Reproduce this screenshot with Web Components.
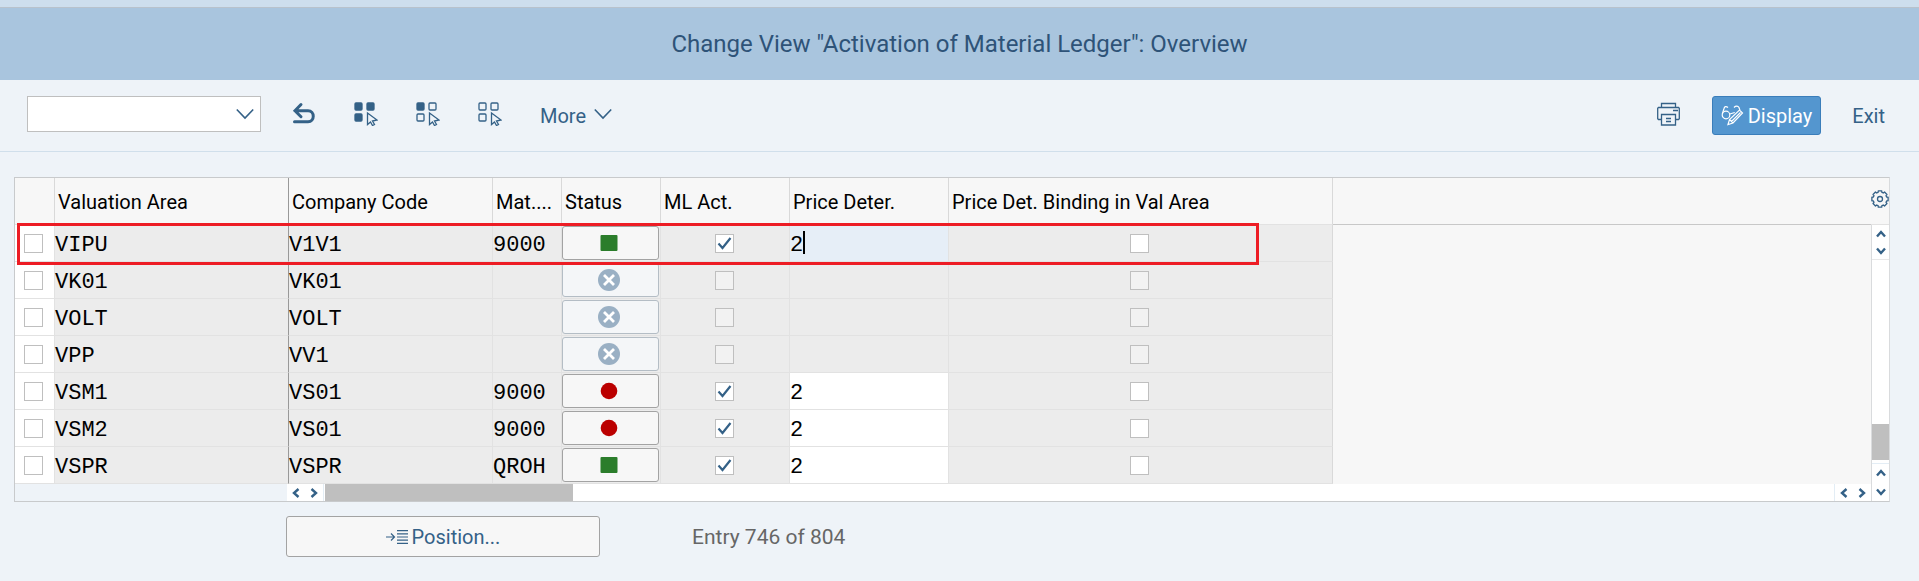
<!DOCTYPE html>
<html lang="en">
<head>
<meta charset="utf-8">
<title>Change View "Activation of Material Ledger": Overview</title>
<style>
  html, body { margin: 0; min-height: 100vh; background: #eef3f8; }
  body { font: 20px/24px Roboto, "Liberation Sans", sans-serif; color: #000; }
</style>
</head>
<body>
<ledger-app></ledger-app>

<script>
const define = (name, html, setup) => {
  const tpl = document.createElement('template');
  tpl.innerHTML = html;
  customElements.define(name, class extends HTMLElement {
    connectedCallback() {
      if (this.shadowRoot) return;
      this.attachShadow({ mode: 'open' }).append(tpl.content.cloneNode(true));
      if (setup) setup.call(this, this.shadowRoot);
    }
  });
};

/* ---------- icons ---------- */
const pointer = '<path d="M13.5 11v11.500l3-2.500 2 3.500 2-1-2-3.500 4.500-1z"/>';
const box = (x, y, on) => `<rect x="${x}" y="${y}" width="7" height="7" rx="1" ${on ? 'fill="currentColor"' : ''}/>`;
const selectIcon = (a, b, c) => [24, 24, 1.3, box(1, 1, a) + box(13, 1, b) + box(1, 12, c) + pointer];
const gearPath = () => {
  const p = [];
  for (let i = 0; i < 8; i++) {
    for (const [r, d] of [[6.9, -16], [8.3, -12], [8.3, 12], [6.9, 16]]) {
      const a = (i * 45 + d) * Math.PI / 180;
      p.push((9 + r * Math.sin(a)).toFixed(2) + ' ' + (9 - r * Math.cos(a)).toFixed(2));
    }
  }
  return 'M' + p.join('L') + 'z';
};
const ICONS = {
  back: [24, 24, 3, '<path stroke-linecap="round" d="M9 2.500 3 8.700l6 6M3 8.700h13c7 0 7 11 0 11H2.500"/>'],
  all: selectIcon(1, 1, 1),
  block: selectIcon(1, 0, 0),
  none: selectIcon(0, 0, 0),
  caret: [18, 12, 1.6, '<path d="M.8 1.500 9 10l8.200-8.500"/>'],
  print: [24, 24, 1.3, '<path d="M4.500 5.500v-4h14v4M4.500 17.500h-3l-.8-.8V6.300l.8-.8h20l.8.8v10.400l-.8.8h-3M16 8.500h5M9 16.500h5M9 19.500h5"/><path d="M4.500 12.500h14v10.500h-14z"/>'],
  toggle: [23, 21, 1.2, '<circle cx="5" cy="10" r="3.800"/><path d="M1.300 9 3 3.500C3.500 1.500 5 .8 7 2.500M8.800 9l5-1.500M13 2.500c2-2 4-1.500 5 0l1 3M7 19.500l1.500-5 10-9.500 3 3L12 18zM8.500 14.500l3.500 3.500M10.500 16.500l9-9"/>'],
  gear: [18, 18, 1.3, `<path stroke-linejoin="round" d="${gearPath()}"/><circle cx="9" cy="9" r="2.500"/>`],
  goto: [22, 14, 1.2, '<path d="M0 7h8M5 3.500 8.500 7 5 10.500M11 .6h11M11 3.800h11M11 7h11M11 10.200h11M11 13.400h11"/>'],
  up: [10, 8, 2.4, '<path d="M1 6.500 5 2l4 4.500"/>'],
  down: [10, 8, 2.4, '<path d="M1 1.500 5 6l4-4.500"/>'],
  left: [8, 10, 2.4, '<path d="M6.500 1 2 5l4.500 4"/>'],
  right: [8, 10, 2.4, '<path d="M1.500 1 6 5l-4.500 4"/>'],
  ok: [18, 18, 0, '<rect x=".5" y="1" width="17" height="16" rx="1" fill="#2b7d2b"/>'],
  stop: [18, 18, 0, '<circle cx="9" cy="9" r="8.300" fill="#bb0000"/>'],
  off: [22, 22, 2.8, '<circle cx="11" cy="11" r="11" fill="#9ab0c4" stroke="none"/><path stroke="#fff" d="M6 6l10 10M16 6 6 16"/>']
};
define('ui-icon', `
<style>:host { display: inline-flex; flex: none; } svg { display: block; }</style>`, function (root) {
  const [w, h, s, body] = ICONS[this.getAttribute('name')];
  root.innerHTML += `<svg width="${w}" height="${h}" viewBox="0 0 ${w} ${h}" fill="none" stroke="${s ? 'currentColor' : 'none'}" stroke-width="${s}" aria-hidden="true">${body}</svg>`;
});

/* ---------- title ---------- */
define('title-bar', `
<style>
  :host { display: block; border-top: 7px solid #cddeed; background: #a9c5de; }
  h1 { margin: 0; border-top: 1px solid #b8c2cc; padding: 20px 16px; font-size: 24px; line-height: 32px; font-weight: 400; color: #2e5378; text-align: center; }
</style>
<h1><slot></slot></h1>`);

/* ---------- toolbar ---------- */
define('command-field', `
<style>
  :host { display: grid; align-items: center; width: 234px; height: 36px; }
  select { grid-area: 1 / 1; width: 100%; height: 100%; appearance: none; border: 1px solid #bfbfbf; border-radius: 0; background: #fff; font: inherit; }
  ui-icon { grid-area: 1 / 1; justify-self: end; margin-right: 7px; color: #346187; pointer-events: none; }
</style>
<select aria-label="Command"><option></option></select><ui-icon name="caret"></ui-icon>`);

define('tool-button', `
<style>
  :host { display: block; }
  button { display: flex; align-items: center; justify-content: center; gap: 8px; height: 36px; padding: 0 18px 0 19px; border: 0; background: none; font: inherit; color: #346187; white-space: nowrap; }
  span { padding-top: 4px; }
  :host([label]) span { display: none; }
  :host([label]) button { padding: 0 19px; }
  :host([primary]) button { height: 39px; gap: 4px; padding: 0 8px; border: 1px solid #3a7dba; border-radius: 3px; background: #5496cf; color: #fff; }
  :host([primary]) span { padding-top: 1px; }
</style>
<button type="button"><slot name="before"></slot><span><slot></slot></span><slot name="after"></slot></button>`, function (root) {
  const label = this.getAttribute('label');
  if (label) root.querySelector('button').setAttribute('aria-label', label);
});

define('tool-bar', `
<style>
  :host { display: flex; justify-content: space-between; padding: 16px 16px 16px 27px; border-bottom: 1px solid #d0dfeb; }
  div { display: flex; align-items: flex-start; }
  .left command-field { margin-right: 12px; }
  .right { gap: 12px; }
</style>
<div class="left">
  <command-field></command-field>
  <tool-button label="Back"><ui-icon slot="before" name="back"></ui-icon></tool-button>
  <tool-button label="Select All"><ui-icon slot="before" name="all"></ui-icon></tool-button>
  <tool-button label="Select Block"><ui-icon slot="before" name="block"></ui-icon></tool-button>
  <tool-button label="Deselect All"><ui-icon slot="before" name="none"></ui-icon></tool-button>
  <tool-button>More<ui-icon slot="after" name="caret"></ui-icon></tool-button>
</div>
<div class="right">
  <tool-button label="Print"><ui-icon slot="before" name="print"></ui-icon></tool-button>
  <tool-button primary><ui-icon slot="before" name="toggle"></ui-icon>Display</tool-button>
  <tool-button>Exit</tool-button>
</div>`);

/* ---------- cell controls ---------- */
define('check-box', `
<style>
  :host { display: flex; justify-content: center; padding-right: 2px; }
  input { appearance: none; box-sizing: border-box; width: 19px; height: 19px; margin: 0; border: 1px solid #bfbfbf; background: #fff; grid-area: 1 / 1; }
  input:disabled { background: #f2f2f2; }
  div { display: grid; place-items: center; }
  svg { grid-area: 1 / 1; pointer-events: none; }
  input:not(:checked) + svg { visibility: hidden; }
</style>
<div><input type="checkbox"><svg width="15" height="15" viewBox="0 0 15 15" fill="none" stroke="#346187" stroke-width="2.200" aria-hidden="true"><path d="M1.500 7.500 5.500 12 13.500 2"/></svg></div>`, function (root) {
  const input = root.querySelector('input');
  input.checked = this.hasAttribute('checked');
  input.disabled = this.hasAttribute('disabled');
  input.setAttribute('aria-label', this.getAttribute('label'));
});

define('status-button', `
<style>
  :host { display: block; padding-right: 1px; }
  button { display: flex; align-items: center; justify-content: center; width: 100%; height: 34px; padding: 0 4px 0 0; border: 1px solid #a3a3a3; border-radius: 3px; background: #f7f7f7; }
  button:disabled { border-color: #b4bdc5; background: #f4f6f8; }
</style>
<button type="button"></button>`, function (root) {
  const state = this.getAttribute('state');
  const b = root.querySelector('button');
  b.disabled = state === 'off';
  b.setAttribute('aria-label', { ok: 'Active', stop: 'Not active', off: 'Not relevant' }[state]);
  b.innerHTML = `<ui-icon name="${state}"></ui-icon>`;
});

define('price-field', `
<style>
  :host { display: block; position: relative; background: #fff; }
  input { display: block; box-sizing: border-box; width: 100%; height: 36px; margin: 0; padding: 5px 0 0; border: 0; background: none; font: inherit; color: inherit; outline: 0; }
  :host([active]) { background: #e6eef7; }
  i { display: none; position: absolute; left: 13px; top: 6px; width: 2px; height: 23px; background: #000; }
  :host([active]) i { display: block; }
</style>
<input type="text" aria-label="Price Deter."><i></i>`, function (root) {
  root.querySelector('input').value = this.getAttribute('value');
});

/* ---------- scroll bars ---------- */
define('scroll-bar', `
<style>
  :host { display: flex; background: #fff; color: #346187; }
  :host([vertical]) { flex-direction: column; }
  .arrows { display: flex; flex: none; align-items: center; justify-content: space-around; box-sizing: border-box; width: 37px; border: 0 solid #e3edf5; }
  .first { border-right-width: 1px; }
  .last { border-left-width: 1px; }
  .track { display: flex; flex: 1; }
  .thumb { background: #bfbfbf; width: 248px; margin-left: 1px; }
  :host([vertical]) .arrows { flex-direction: column; width: auto; height: 35px; border-width: 0; }
  :host([vertical]) .first { border-bottom: 1px solid #e8e8e8; }
  :host([vertical]) .last { border-top: 1px solid #e3edf5; height: 38px; }
  :host([vertical]) .track { flex-direction: column; justify-content: flex-end; }
  :host([vertical]) .thumb { width: auto; height: 36px; margin: 0 0 3px; }
</style>
<div class="arrows first"></div><div class="track"><div class="thumb"></div></div><div class="arrows last"></div>`, function (root) {
  const names = this.hasAttribute('vertical') ? ['up', 'down'] : ['left', 'right'];
  for (const a of root.querySelectorAll('.arrows')) a.innerHTML = names.map(n => `<ui-icon name="${n}"></ui-icon>`).join('');
});

/* ---------- table ---------- */
const ROWS = [
  ['VIPU', 'V1V1', '9000', 'ok', true, '2'],
  ['VK01', 'VK01', '', 'off', false, null],
  ['VOLT', 'VOLT', '', 'off', false, null],
  ['VPP', 'VV1', '', 'off', false, null],
  ['VSM1', 'VS01', '9000', 'stop', true, '2'],
  ['VSM2', 'VS01', '9000', 'stop', true, '2'],
  ['VSPR', 'VSPR', 'QROH', 'ok', true, '2']
];
define('ledger-table', `
<style>
  :host { display: grid; grid-template-columns: minmax(0, 1fr) 18px; position: relative; margin: 25px 29px 0 14px; border: 1px solid #c8cacc; border-right-color: #d9dbdd; }
  table { width: 100%; table-layout: fixed; border-collapse: separate; border-spacing: 0; background: #f7f7f7; }
  th, td { box-sizing: border-box; padding: 0; border: 0 solid #e2e2e2; border-width: 0 1px 1px 0; text-align: left; vertical-align: middle; white-space: nowrap; }
  th { height: 47px; padding: 2px 3px 0; font-weight: 400; overflow: hidden; text-overflow: ellipsis; border-right-color: #d9d9d9; }
  th:nth-child(8), td:nth-child(8) { border-right-color: #d9d9d9; }
  td { height: 37px; background: #ececec; font: 22px/24px "Liberation Mono", monospace; }
  td.text { padding: 5px 0 0; }
  td:first-child { background: #fff; }
  th:nth-child(2), td:nth-child(2) { border-right-color: #999; }
  th:last-child { border-right: 0; border-bottom-color: #c8c8c8; }
  td:last-child { border: 0; background: #f7f7f7; }
  .side { display: flex; flex-direction: column; grid-row: 1 / 3; grid-column: 2; }
  .settings { height: 47px; box-sizing: border-box; margin: 0; padding: 0 0 4px; border: 0; border-bottom: 1px solid #e2e2e2; background: #f7f7f7; color: #346187; display: flex; align-items: center; justify-content: center; }
  .side scroll-bar { flex: 1; border-left: 1px solid #d9dbdd; }
  .bottom { height: 17px; padding-left: 272px; display: flex; }
  .bottom scroll-bar { flex: 1; }
  .highlight { position: absolute; left: 2px; top: 45px; width: 1242px; height: 42px; box-sizing: border-box; border: 3px solid #ed1c24; pointer-events: none; }
</style>
<table>
  <colgroup><col style="width:40px"><col style="width:234px"><col style="width:204px"><col style="width:69px"><col style="width:99px"><col style="width:129px"><col style="width:159px"><col style="width:384px"><col></colgroup>
  <thead><tr><th></th><th>Valuation Area</th><th>Company Code</th><th>Mat....</th><th>Status</th><th>ML Act.</th><th>Price Deter.</th><th>Price Det. Binding in Val Area</th><th></th></tr></thead>
  <tbody></tbody>
</table>
<div class="side">
  <button type="button" class="settings" aria-label="Configuration"><ui-icon name="gear"></ui-icon></button>
  <scroll-bar vertical></scroll-bar>
</div>
<div class="bottom"><scroll-bar></scroll-bar></div>
<div class="highlight"></div>`, function (root) {
  root.querySelector('tbody').innerHTML = ROWS.map(([area, company, mat, state, act, price], i) => {
    const lock = state === 'off' ? 'disabled' : '';
    return `<tr>
      <td><check-box label="Select ${area}"></check-box></td>
      <td class="text">${area}</td><td class="text">${company}</td><td class="text">${mat}</td>
      <td><status-button state="${state}"></status-button></td>
      <td><check-box label="ML Act." ${act ? 'checked' : ''} ${lock}></check-box></td>
      <td>${price === null ? '' : `<price-field value="${price}" ${i ? '' : 'active'}></price-field>`}</td>
      <td><check-box label="Price Det. Binding in Val Area" ${lock}></check-box></td>
      <td></td></tr>`;
  }).join('');
});

/* ---------- footer ---------- */
define('table-footer', `
<style>
  :host { display: flex; align-items: center; gap: 92px; padding: 14px 16px 24px 286px; }
  button { display: flex; align-items: center; justify-content: center; gap: 4px; box-sizing: border-box; width: 314px; height: 41px; border: 1px solid #a3a3a3; border-radius: 3px; background: #f7f7f7; font: inherit; color: #346187; }
  span { font-size: 21px; color: #666; }
</style>
<button type="button"><ui-icon name="goto"></ui-icon>Position...</button>
<span>Entry 746 of 804</span>`);

define('ledger-app', `
<style>:host { display: block; }</style>
<title-bar>Change View "Activation of Material Ledger": Overview</title-bar>
<tool-bar></tool-bar>
<main><ledger-table></ledger-table><table-footer></table-footer></main>`);
</script>
</body>
</html>
